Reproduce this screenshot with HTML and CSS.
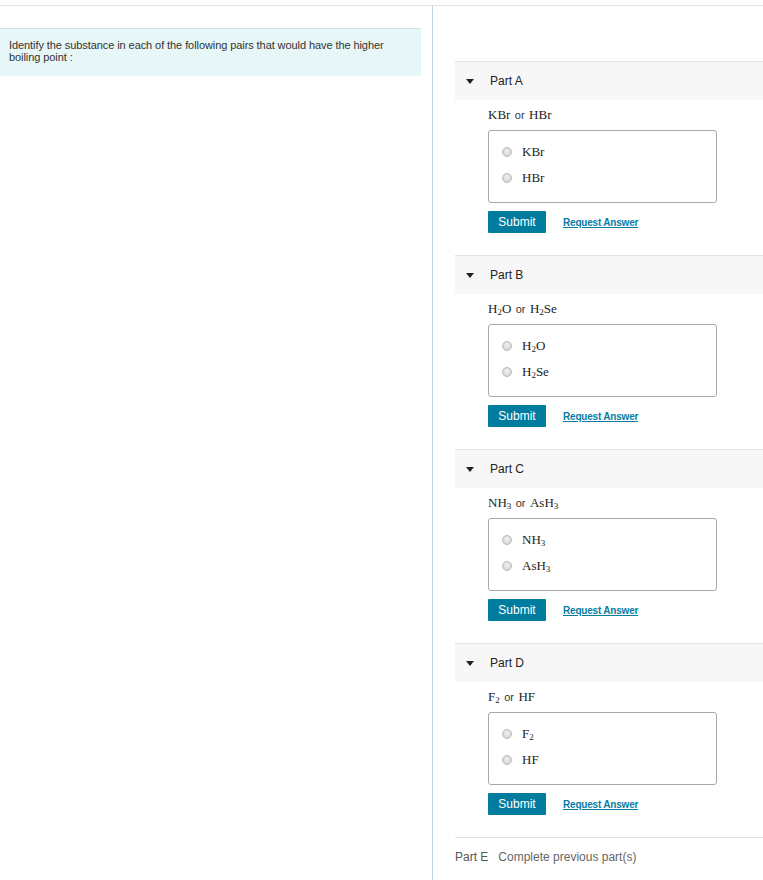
FILE: index.html
```html
<!DOCTYPE html>
<html lang="en">
<head>
<meta charset="utf-8">
<title>Boiling point</title>
<link rel="stylesheet" href="styles.css">
</head>
<body>
<div class="topbar"></div>
<div class="layout">
  <div class="left">
    <div class="intro">Identify the substance in each of the following pairs that would have the higher boiling point :</div>
  </div>
  <div class="right">
    <div class="part">
      <div class="part-header"><span class="caret"></span><span class="part-title">Part A</span></div>
      <div class="part-body">
        <div class="question"><span class="chem">KBr</span> <span class="or">or</span> <span class="chem">HBr</span></div>
        <div class="choices">
          <div class="choice"><span class="radio"></span><span class="chem">KBr</span></div>
          <div class="choice"><span class="radio"></span><span class="chem">HBr</span></div>
        </div>
        <div class="actions"><button class="submit">Submit</button><a class="request" href="#">Request Answer</a></div>
      </div>
    </div>
    <div class="part">
      <div class="part-header"><span class="caret"></span><span class="part-title">Part B</span></div>
      <div class="part-body">
        <div class="question"><span class="chem">H<sub>2</sub>O</span> <span class="or">or</span> <span class="chem">H<sub>2</sub>Se</span></div>
        <div class="choices">
          <div class="choice"><span class="radio"></span><span class="chem">H<sub>2</sub>O</span></div>
          <div class="choice"><span class="radio"></span><span class="chem">H<sub>2</sub>Se</span></div>
        </div>
        <div class="actions"><button class="submit">Submit</button><a class="request" href="#">Request Answer</a></div>
      </div>
    </div>
    <div class="part">
      <div class="part-header"><span class="caret"></span><span class="part-title">Part C</span></div>
      <div class="part-body">
        <div class="question"><span class="chem">NH<sub>3</sub></span> <span class="or">or</span> <span class="chem">AsH<sub>3</sub></span></div>
        <div class="choices">
          <div class="choice"><span class="radio"></span><span class="chem">NH<sub>3</sub></span></div>
          <div class="choice"><span class="radio"></span><span class="chem">AsH<sub>3</sub></span></div>
        </div>
        <div class="actions"><button class="submit">Submit</button><a class="request" href="#">Request Answer</a></div>
      </div>
    </div>
    <div class="part">
      <div class="part-header"><span class="caret"></span><span class="part-title">Part D</span></div>
      <div class="part-body">
        <div class="question"><span class="chem">F<sub>2</sub></span> <span class="or">or</span> <span class="chem">HF</span></div>
        <div class="choices">
          <div class="choice"><span class="radio"></span><span class="chem">F<sub>2</sub></span></div>
          <div class="choice"><span class="radio"></span><span class="chem">HF</span></div>
        </div>
        <div class="actions"><button class="submit">Submit</button><a class="request" href="#">Request Answer</a></div>
      </div>
    </div>
    <div class="part-locked"><span class="locked-title">Part E</span><span class="locked-note">Complete previous part(s)</span></div>
  </div>
</div>
</body>
</html>
```

FILE: styles.css
```css
html, body {
  margin: 0;
  padding: 0;
  background: #ffffff;
  font-family: "Liberation Sans", Arial, sans-serif;
  color: #222;
}

.topbar {
  margin-top: 5px;
  border-top: 1px solid #e3e3e3;
}

.layout {
  display: flex;
  min-height: calc(100vh - 6px);
}

.left {
  width: 432px;
  flex: none;
  padding-top: 22px;
}

.intro {
  width: 421px;
  box-sizing: border-box;
  border-top: 1px solid #dcdcdc;
  background: #e7f6f7;
  padding: 10px 20px 13px 9px;
  font-size: 11px;
  line-height: 12px;
  letter-spacing: -0.08px;
  color: #333;
}

.right {
  flex: 1;
  border-left: 1px solid #c3d4e6;
  padding-left: 22px;
  padding-top: 55px;
}

.part-header {
  display: flex;
  align-items: center;
  height: 38px;
  border-top: 1px solid #e3e3e3;
  background: #f7f7f7;
  padding-left: 11px;
}

.caret {
  width: 0;
  height: 0;
  border-left: 4px solid transparent;
  border-right: 4px solid transparent;
  border-top: 5px solid #222;
  margin-right: 16px;
}

.part-title {
  font-size: 12px;
  color: #222;
}

.part-body {
  padding: 5px 0 22px 33px;
}

.chem {
  font-family: "Liberation Serif", "Times New Roman", serif;
  font-size: 13px;
  color: #222;
}

.chem sub {
  font-size: 9px;
  vertical-align: -2px;
  line-height: 0;
}

.question {
  height: 19px;
  line-height: 18px;
}

.or {
  font-family: "Liberation Sans", Arial, sans-serif;
  font-size: 11px;
  color: #333;
}

.choices {
  margin-top: 6px;
  width: 229px;
  box-sizing: border-box;
  border: 1px solid #a8a8a8;
  border-radius: 3px;
  padding: 8px 0 11px 13px;
}

.choice {
  display: flex;
  align-items: center;
  height: 26px;
}

.radio {
  width: 8px;
  height: 8px;
  border-radius: 50%;
  border: 1px solid #b9b9b9;
  background: radial-gradient(circle at 50% 40%, #f2f2f2 0%, #dadada 60%, #cfcfcf 100%);
  margin-right: 10px;
  flex: none;
}

.actions {
  display: flex;
  align-items: center;
  margin-top: 8px;
}

.submit {
  width: 58px;
  height: 22px;
  border: none;
  border-radius: 1px;
  background: #007c9f;
  color: #ffffff;
  font-family: "Liberation Sans", Arial, sans-serif;
  font-size: 12px;
  padding: 0;
  margin: 0;
}

.request {
  margin-left: 17px;
  font-size: 10px;
  font-weight: bold;
  letter-spacing: -0.2px;
  color: #0a7ca3;
  text-decoration: underline;
}

.part-locked {
  border-top: 1px solid #e0e0e0;
  padding-top: 12px;
  font-size: 12px;
  line-height: 14px;
}

.locked-title {
  color: #555;
  margin-right: 10px;
}

.locked-note {
  color: #666;
}
```
